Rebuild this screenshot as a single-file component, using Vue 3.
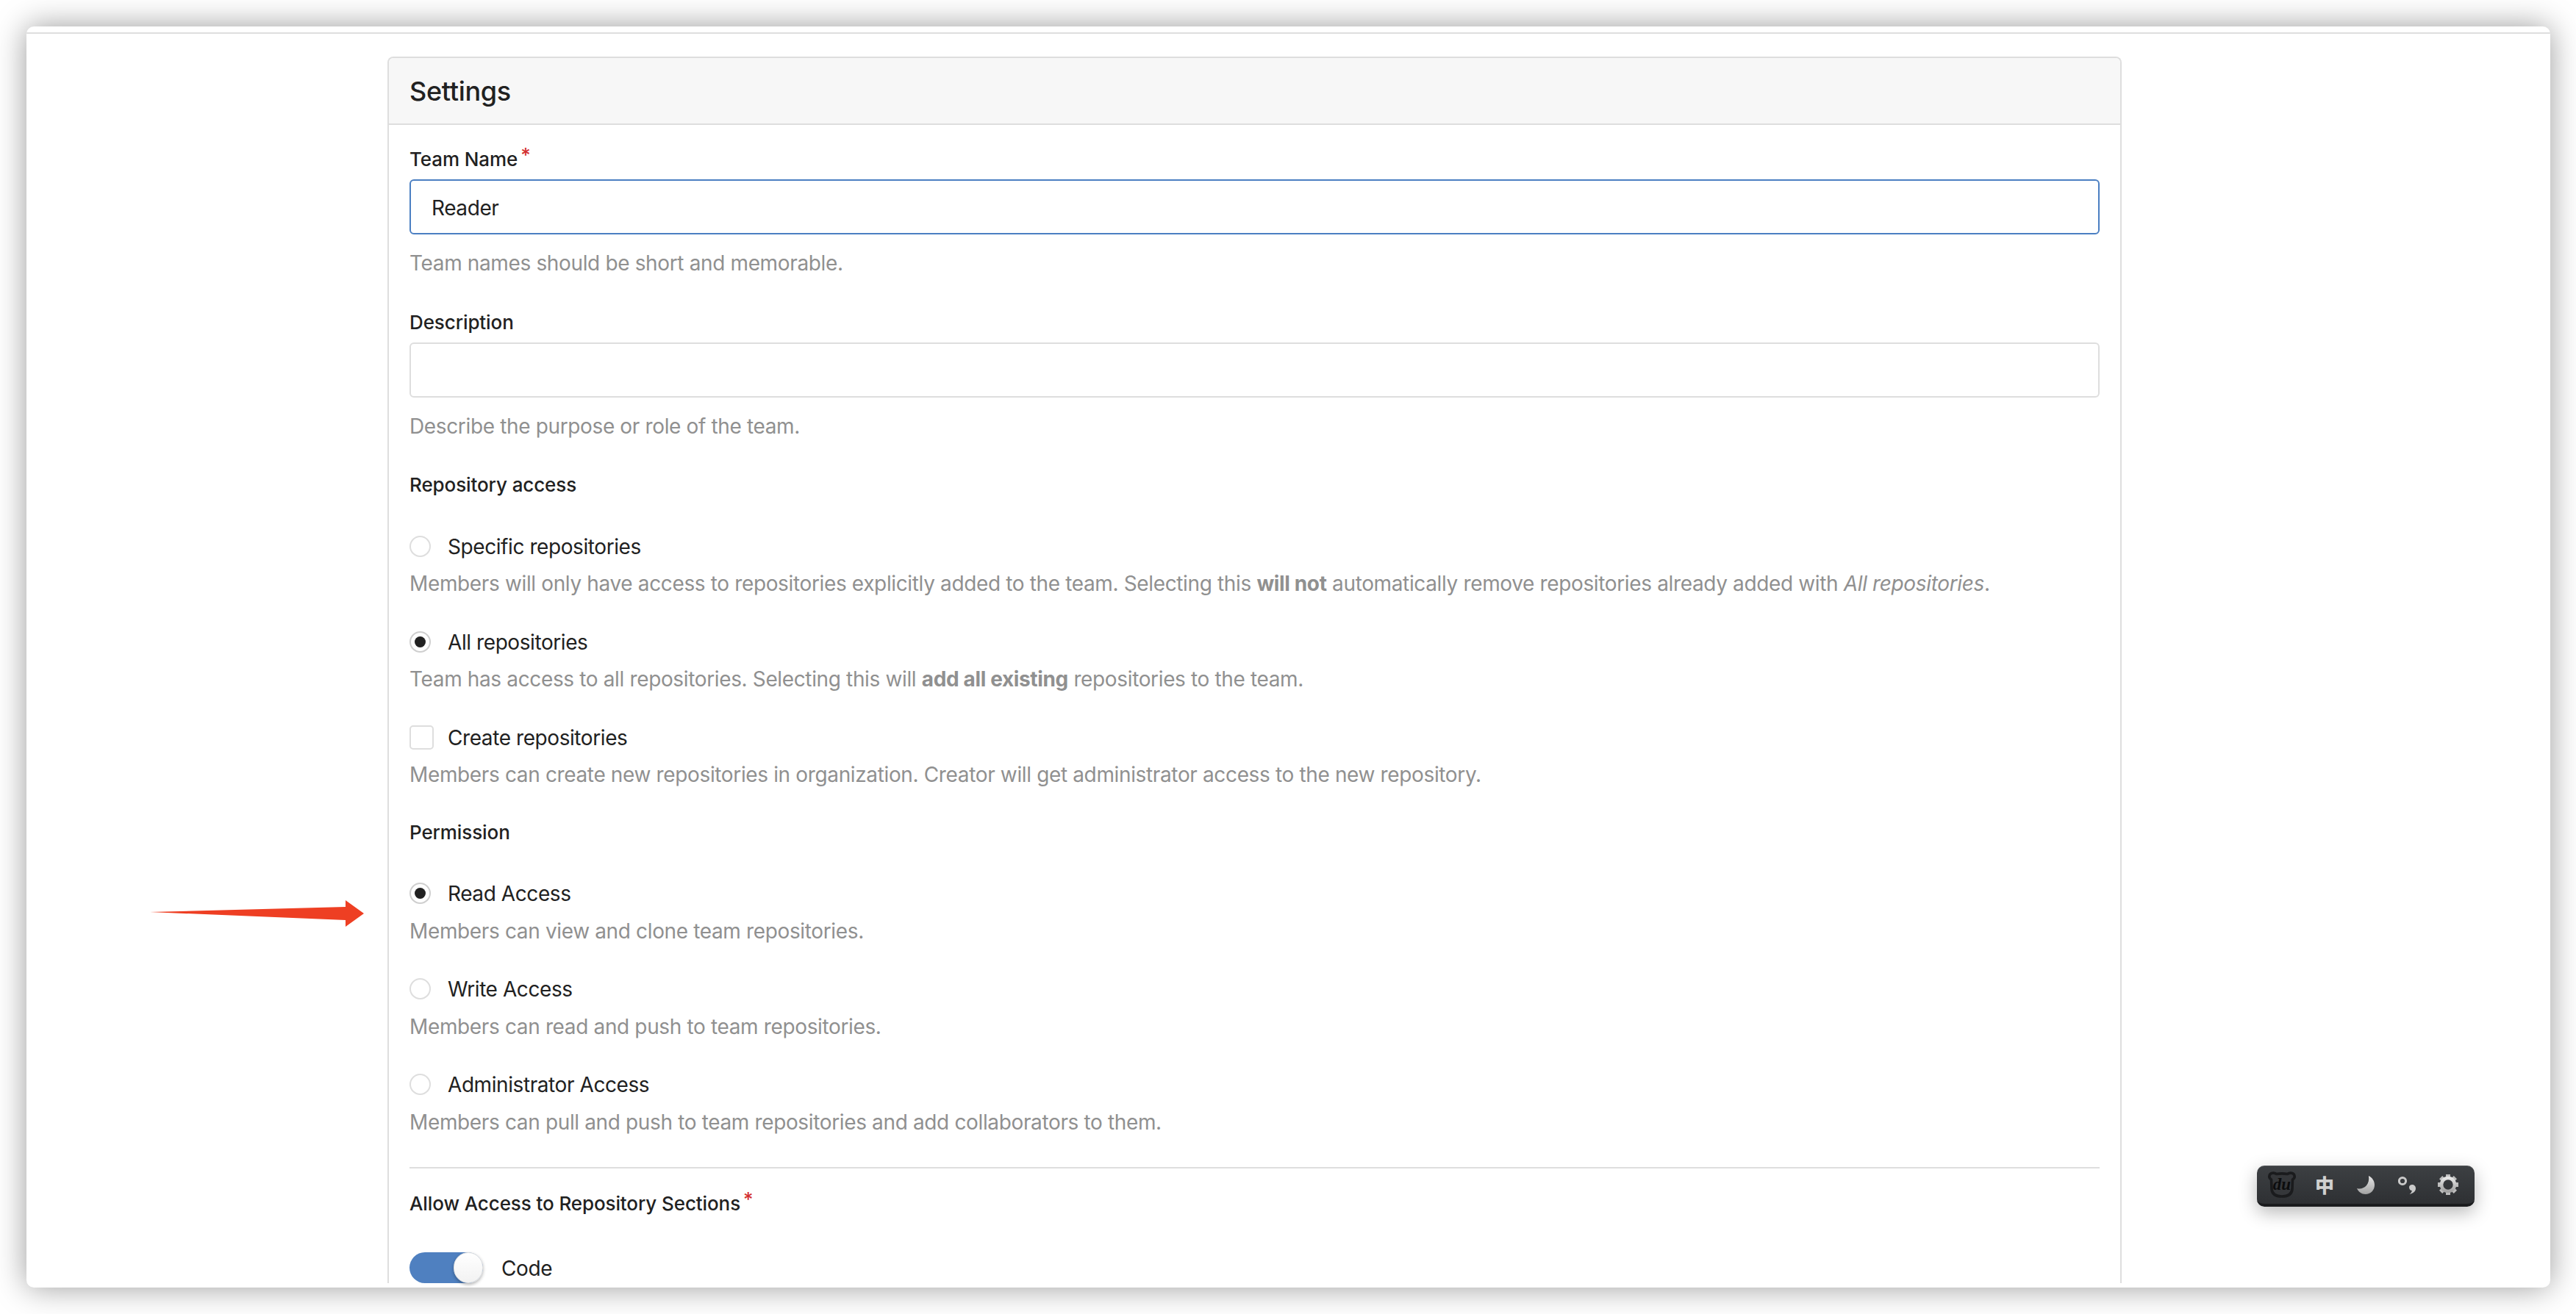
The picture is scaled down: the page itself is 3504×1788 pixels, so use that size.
<script setup>
const accessOptions = [
  { type: 'radio', label: 'Specific repositories', checked: false, html: 'Members will only have access to repositories explicitly added to the team. Selecting this <b>will not</b> automatically remove repositories already added with <i>All repositories</i>.' },
  { type: 'radio', label: 'All repositories', checked: true, html: 'Team has access to all repositories. Selecting this will <b>add all existing</b> repositories to the team.' },
  { type: 'check', label: 'Create repositories', checked: false, html: 'Members can create new repositories in organization. Creator will get administrator access to the new repository.' }
]
const permOptions = [
  { type: 'radio', label: 'Read Access', checked: true, html: 'Members can view and clone team repositories.' },
  { type: 'radio', label: 'Write Access', checked: false, html: 'Members can read and push to team repositories.' },
  { type: 'radio', label: 'Administrator Access', checked: false, html: 'Members can pull and push to team repositories and add collaborators to them.' }
]
const gearTeeth = [0, 45, 90, 135, 180, 225, 270, 315]
</script>

<template>
  <div class="page">
    <div class="window">
      <div class="topline"></div>
      <section class="card">
        <h4 class="card-head">Settings</h4>
        <div class="card-body">
          <div class="field first">
            <label class="label">Team Name<span class="req">*</span></label>
            <div class="input focus"><span class="value">Reader</span></div>
            <p class="help">Team names should be short and memorable.</p>
          </div>
          <div class="field desc">
            <label class="label">Description</label>
            <div class="input"></div>
            <p class="help">Describe the purpose or role of the team.</p>
          </div>
          <div class="field">
            <label class="label">Repository access</label>
            <div class="options access">
              <div v-for="o in accessOptions" :key="o.label" class="option">
                <div class="opt-row">
                  <span :class="[o.type, { on: o.checked }]"></span>
                  <span class="opt-label">{{ o.label }}</span>
                </div>
                <p class="help tight" v-html="o.html"></p>
              </div>
            </div>
          </div>
          <div class="field">
            <label class="label">Permission</label>
            <div class="options perm">
              <div v-for="o in permOptions" :key="o.label" class="option">
                <div class="opt-row">
                  <span :class="[o.type, { on: o.checked }]"></span>
                  <span class="opt-label">{{ o.label }}</span>
                </div>
                <p class="help tight" v-html="o.html"></p>
              </div>
            </div>
          </div>
          <hr class="divider" />
          <label class="label">Allow Access to Repository Sections<span class="req">*</span></label>
          <div class="toggle-row">
            <span class="toggle"><span class="knob"></span></span>
            <span class="opt-label">Code</span>
          </div>
        </div>
      </section>
    </div>

    <svg class="arrow" width="292" height="37" viewBox="0 0 292 37">
      <path d="M0 16 L266 9 L266 0 L291 18 L266 36 L266 27 Z" fill="#ee3f23" />
    </svg>

    <div class="ime">
      <span class="bear">
        <svg width="40" height="37" viewBox="0 0 40 37">
          <path d="M3 5.5 C4 2 9 1 12.5 3.5 C17 2.8 23 2.8 27.5 3.5 C31 1 36 2 37 5.5 C37.8 8 36 10 34.5 11 L34 24 C33.5 31 28 34 20 34 C12 34 6.5 31 6 24 L5.5 11 C4 10 2.2 8 3 5.5 Z" fill="#35373a" stroke="#1a1b1d" stroke-width="3.6" stroke-linejoin="round" />
        </svg>
        <span class="du">du</span>
      </span>
      <span class="zh">中</span>
      <svg class="moon" width="24" height="25" viewBox="0 0 24 25">
        <defs>
          <linearGradient id="ig" x1="0" y1="0" x2="0" y2="1">
            <stop offset="0" stop-color="#e6e6e6" />
            <stop offset="1" stop-color="#a2a2a2" />
          </linearGradient>
        </defs>
        <path d="M16 0 C21 2.5 24 7 24 12.5 C24 19.5 18.5 25 11.5 25 C6.5 25 2 21.8 0 17 C8 19.5 18 13 16 0 Z" fill="url(#ig)" />
      </svg>
      <svg class="punct" width="24" height="26" viewBox="0 0 24 26">
        <circle cx="6" cy="8" r="4.6" fill="none" stroke="#c9c9c9" stroke-width="3" />
        <path d="M15 16.5 C15 14.4 16.8 13 19 13 C21.8 13 24 15 24 18 C24 21.8 20.8 25 15.5 26 C17.4 24.6 18.6 23 18.8 21 C16.6 21 15 19 15 16.5 Z" fill="#cacaca" />
      </svg>
      <svg class="gear" width="28" height="28" viewBox="0 0 28 28">
        <rect v-for="a in gearTeeth" :key="a" x="11" y="0" width="6" height="6" fill="#bdbdbd" :transform="`rotate(${a} 14 14)`" />
        <circle cx="14" cy="14" r="9" fill="none" stroke="url(#ig)" stroke-width="4.6" />
      </svg>
    </div>
  </div>
</template>

<style>
html, body { margin: 0; background: #fff; overflow: hidden; }
</style>

<style scoped>
.page {
  position: relative;
  box-sizing: border-box;
  width: 3504px;
  height: 1788px;
  padding: 36px 35px 36px 36px;
  background: #fff;
  font-family: Inter, "Noto Sans CJK SC", sans-serif;
  font-size: 28px;
  letter-spacing: -0.42px;
  line-height: 40px;
  color: #212121;
}
.window {
  height: 100%;
  background: #fff;
  border-radius: 10px;
  overflow: hidden;
  box-shadow: 0 0 44px rgba(0, 0, 0, .4);
  padding-top: 8px;
  box-sizing: border-box;
}
.topline { height: 2px; background: #dedede; }
.card {
  box-sizing: border-box;
  width: 2359px;
  margin: 31px 0 0 491px;
  border: 2px solid #dedede;
  border-bottom: 0;
  border-radius: 8px 8px 0 0;
}
.card-head {
  margin: 0;
  height: 89px;
  padding-left: 28px;
  display: flex;
  align-items: center;
  background: #f7f7f7;
  border-bottom: 2px solid #dedede;
  border-radius: 6px 6px 0 0;
  font-size: 36px;
  font-weight: 500;
  letter-spacing: -0.3px;
}
.card-body { padding: 27px 28px 0; }
.field { margin-bottom: 39px; }
.field.first { margin-bottom: 41px; }
.field.desc { margin-bottom: 40px; }
.label { display: block; font-size: 26px; font-weight: 500; letter-spacing: -0.1px; }
.req { color: #d32f2f; font-size: 26px; margin-left: 4px; position: relative; top: -6px; }
.input {
  box-sizing: border-box;
  height: 75px;
  margin-top: 7px;
  padding-left: 28px;
  display: flex;
  align-items: center;
  border: 2px solid #dedede;
  border-radius: 6px;
}
.input.focus { border-color: #4b7fc2; }
.value { padding-top: 2px; }
.help { margin: 19px 0 0; color: #909090; letter-spacing: -0.36px; }
.help.tight { margin-top: 11px; }
.options { display: flex; flex-direction: column; gap: 39px; }
.options.access { margin-top: 43px; }
.options.perm { margin-top: 42px; gap: 38px; }
.options.perm .help.tight { margin-top: 12px; }
.opt-row { display: flex; align-items: center; height: 40px; }
.opt-label { white-space: nowrap; padding-top: 1px; }
.radio, .check {
  box-sizing: border-box;
  flex: none;
  width: 29px;
  height: 29px;
  margin-right: 23px;
  border: 2px solid #dedede;
  border-radius: 50%;
  background: #fff;
  display: flex;
  align-items: center;
  justify-content: center;
}
.radio.on { border-color: #cfcfcf; }
.radio.on::after {
  content: "";
  width: 15px;
  height: 15px;
  border-radius: 50%;
  background: #212121;
}
.check { width: 33px; height: 33px; margin-right: 19px; border-radius: 5px; }
.divider { border: 0; height: 2px; background: #dedede; margin: 41px 0 28px; }
.toggle-row { display: flex; align-items: center; margin-top: 46px; height: 42px; }
.toggle {
  position: relative;
  flex: none;
  width: 100px;
  height: 42px;
  margin-right: 25px;
  border-radius: 21px;
  background: #4f80c0;
}
.knob {
  position: absolute;
  right: 0;
  top: 0;
  box-sizing: border-box;
  width: 40px;
  height: 42px;
  border-radius: 21px;
  border: 1px solid #e2e2e2;
  background: linear-gradient(#fff, #f2f2f2);
  box-shadow: 0 2px 4px rgba(0, 0, 0, .3);
}
.arrow { position: absolute; left: 204px; top: 1225px; }
.ime {
  position: absolute;
  left: 3070px;
  top: 1586px;
  box-sizing: border-box;
  width: 296px;
  height: 56px;
  padding-left: 14px;
  display: flex;
  align-items: center;
  border-radius: 10px;
  background: linear-gradient(#3d4043, #2e3033);
  border-bottom: 4px solid #1b1c1e;
  box-shadow: 0 8px 24px rgba(0, 0, 0, .28), inset 0 1px rgba(255, 255, 255, .12);
  letter-spacing: 0;
}
.bear { position: relative; width: 40px; height: 37px; flex: none; margin-right: 25px; }
.bear svg { display: block; }
.du {
  position: absolute;
  left: 0;
  right: 0;
  top: 5px;
  text-align: center;
  font-family: "Liberation Serif", serif;
  font-style: italic;
  font-weight: 700;
  font-size: 23px;
  line-height: 26px;
  color: #0c0d0e;
}
.zh {
  width: 26px;
  flex: none;
  margin-right: 31px;
  font-family: "Noto Sans CJK SC", sans-serif;
  font-weight: 900;
  font-size: 26px;
  line-height: 30px;
  text-align: center;
  color: #d0d0d0;
}
.moon { flex: none; margin-right: 32px; }
.punct { flex: none; margin-right: 30px; }
.gear { flex: none; }
</style>
